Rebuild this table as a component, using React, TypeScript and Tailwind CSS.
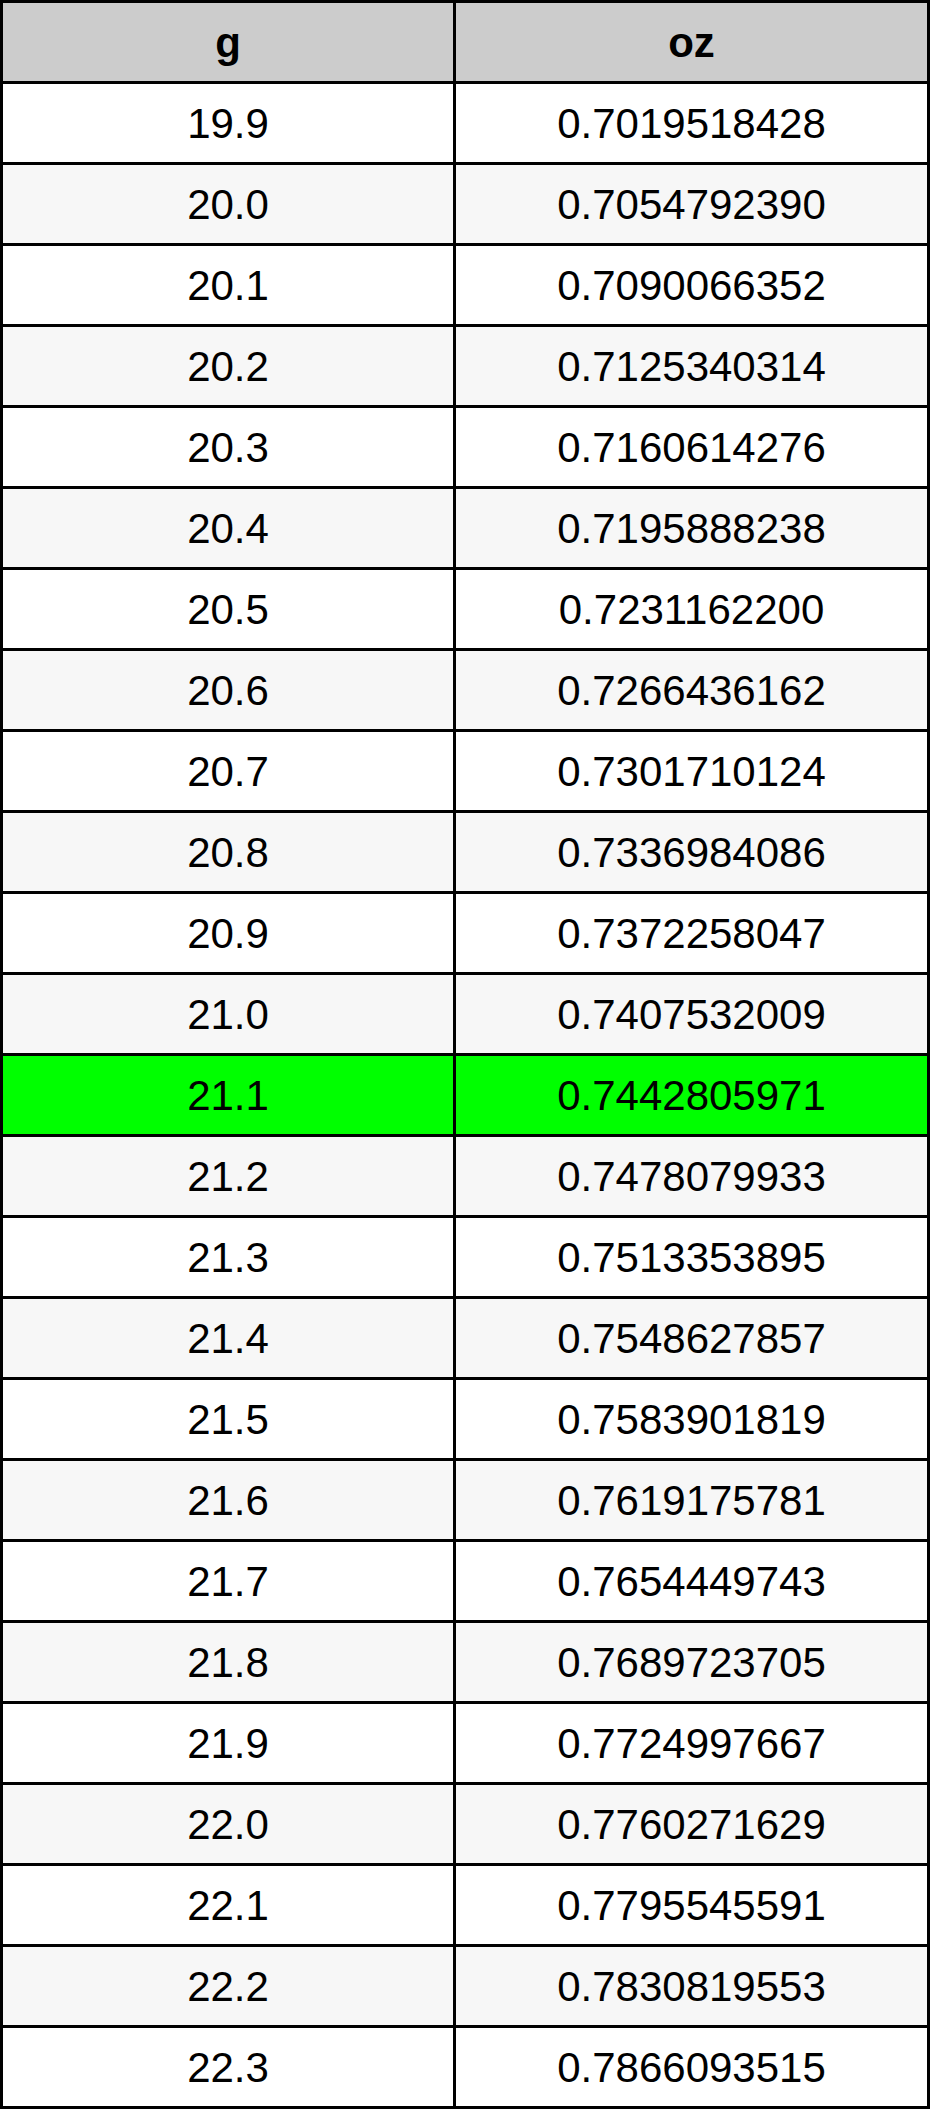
const rows: [string, string][] = [
  ["19.9", "0.7019518428"],
  ["20.0", "0.7054792390"],
  ["20.1", "0.7090066352"],
  ["20.2", "0.7125340314"],
  ["20.3", "0.7160614276"],
  ["20.4", "0.7195888238"],
  ["20.5", "0.7231162200"],
  ["20.6", "0.7266436162"],
  ["20.7", "0.7301710124"],
  ["20.8", "0.7336984086"],
  ["20.9", "0.7372258047"],
  ["21.0", "0.7407532009"],
  ["21.1", "0.7442805971"],
  ["21.2", "0.7478079933"],
  ["21.3", "0.7513353895"],
  ["21.4", "0.7548627857"],
  ["21.5", "0.7583901819"],
  ["21.6", "0.7619175781"],
  ["21.7", "0.7654449743"],
  ["21.8", "0.7689723705"],
  ["21.9", "0.7724997667"],
  ["22.0", "0.7760271629"],
  ["22.1", "0.7795545591"],
  ["22.2", "0.7830819553"],
  ["22.3", "0.7866093515"],
];

const cell =
  "h-[81px] flex items-center justify-center border-r-[3px] border-b-[3px] border-black";

export default function App() {
  return (
    <div className="w-[930px] bg-white font-['Liberation_Sans',Arial,sans-serif] text-[42px] text-black">
      <div className="grid grid-cols-[453px_1fr] border-t-[3px] border-l-[3px] border-black">
        {/* header */}
        <div className={`${cell} bg-[#cccccc] font-bold`}>g</div>
        <div className={`${cell} bg-[#cccccc] font-bold`}>oz</div>

        {rows.map(([g, oz], i) => {
          const bg =
            g === "21.1"
              ? "bg-[#00ff00]"
              : i % 2 === 1
                ? "bg-[#f7f7f7]"
                : "bg-white";
          return [
            <div key={g + "-g"} className={`${cell} ${bg}`}>
              {g}
            </div>,
            <div key={g + "-oz"} className={`${cell} ${bg}`}>
              {oz}
            </div>,
          ];
        })}
      </div>
    </div>
  );
}
